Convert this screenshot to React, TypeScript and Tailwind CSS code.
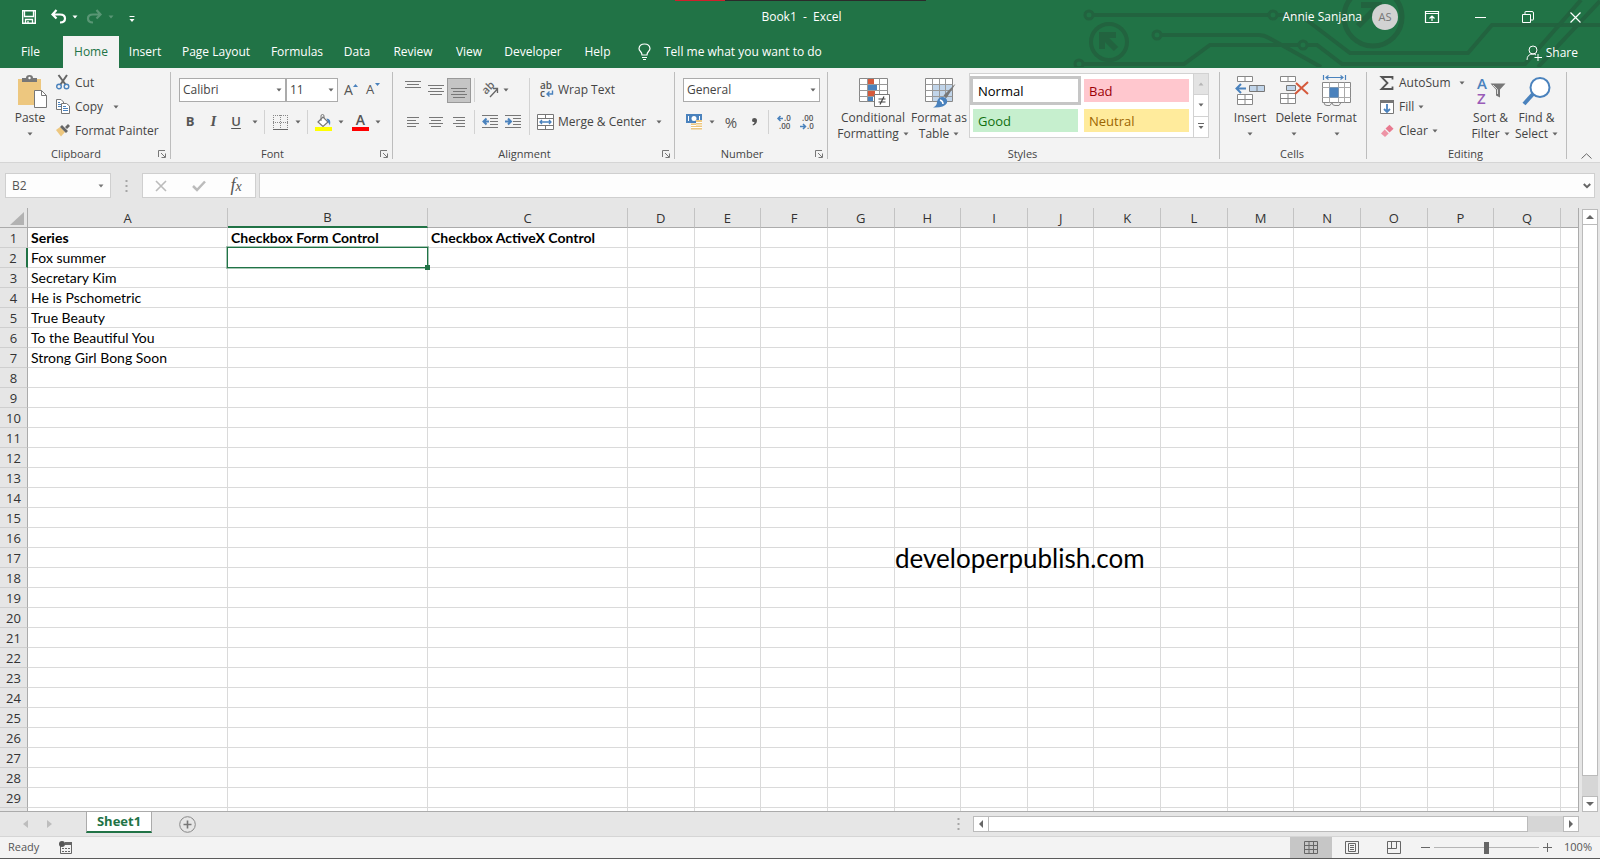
import React from 'react'

interface IconProps {
    children: React.ReactNode
    w: number
    h: number
    className?: string
}

// Thin svg wrapper, one unit = one pixel
const Icon: React.FC<IconProps> = ({ children, w, h, className = '' }) => (
    <svg width={w} height={h} viewBox={`0 0 ${w} ${h}`} fill="none" aria-hidden="true" className={`shrink-0 overflow-visible ${className}`}>
        {children}
    </svg>
)

const Caret: React.FC<{ className?: string }> = ({ className = 'text-[#666]' }) => (
    <Icon w={6} h={4} className={className}>
        <path d="M.5.5h5L3 3.5z" fill="currentColor" />
    </Icon>
)

const Sep: React.FC<{ className?: string }> = ({ className = 'h-6 bg-[#d2d2d2]' }) => <span className={`w-px shrink-0 ${className}`} />

const tabs = [
    { label: 'File', width: 'w-[63px]' },
    { label: 'Home', width: 'w-14' },
    { label: 'Insert', width: 'w-[52px]' },
    { label: 'Page Layout', width: 'w-[90px]' },
    { label: 'Formulas', width: 'w-[72px]' },
    { label: 'Data', width: 'w-12' },
    { label: 'Review', width: 'w-16' },
    { label: 'View', width: 'w-12' },
    { label: 'Developer', width: 'w-20' },
    { label: 'Help', width: 'w-[49px]' },
]

const columns = 'ABCDEFGHIJKLMNOPQ'.split('')

const rows: string[][] = [
    ['Series', 'Checkbox Form Control', 'Checkbox ActiveX Control'],
    ['Fox summer'],
    ['Secretary Kim'],
    ['He is Pschometric'],
    ['True Beauty'],
    ['To the Beautiful You'],
    ['Strong Girl Bong Soon'],
]

const styleTiles = [
    { label: 'Normal', className: 'bg-white text-black outline-3 outline-[#c6c6c6]' },
    { label: 'Bad', className: 'bg-[#ffc7ce] text-[#9c0006]' },
    { label: 'Good', className: 'bg-[#c6efce] text-[#107010]' },
    { label: 'Neutral', className: 'bg-[#ffeb9c] text-[#9c6500]' },
]

const Circuit: React.FC = () => (
    <svg
        width="530"
        height="67"
        viewBox="1070 0 530 67"
        fill="none"
        stroke="#22633f"
        strokeWidth="4"
        aria-hidden="true"
        className="absolute right-0 top-0"
    >
        <circle cx="1089" cy="15" r="4" strokeWidth="3" />
        <path d="M1093 15h176" />
        <circle cx="1273" cy="15" r="4" strokeWidth="3" />
        <path d="M1277 15h23l50 38h118l24-28h108" />
        <circle cx="1157" cy="35" r="4" strokeWidth="3" />
        <path d="M1161 35h98q5 0 10 3l52 29" />
        <circle cx="1079" cy="64" r="4" strokeWidth="3" />
        <path d="M1083 64h101l26-19h88" />
        <circle cx="1303" cy="45" r="4" strokeWidth="3" />
        <path d="M1307 45h10l25 19h183l56-64M1538 67l62-66" />
        <circle cx="1109" cy="42" r="18" />
        <path d="M1102 49V35h14M1103 36l13 13" strokeWidth="6" />
        <circle cx="1373" cy="17" r="29" strokeWidth="5" />
        <path d="M1361 5h18v18M1378 6l-20 20" strokeWidth="6" />
    </svg>
)

const TitleBar: React.FC = () => (
    <div className="relative flex h-9 items-center pb-1 pt-0.5 text-xs text-white">
        <div className="flex flex-1 items-center pl-[22px]">
            <button aria-label="Save">
                <Icon w={14} h={14}>
                    <path d="M.7.7h12.6v12.6H.7z" stroke="#fff" strokeWidth="1.4" />
                    <path d="M2.5 1v5.5h9V1M3.5 13.5v-4h7v4M6 11v3" stroke="#fff" strokeWidth="1.3" />
                </Icon>
            </button>
            <button aria-label="Undo" className="ml-[15px]">
                <Icon w={15} h={14}>
                    <path d="M5.5 0 1.5 4.500l4 4M2 4.500h7q5 0 5 4t-5 4" stroke="#fff" strokeWidth="2.200" />
                </Icon>
            </button>
            <button aria-label="Undo history" className="ml-1.5">
                <Caret className="text-white" />
            </button>
            <button aria-label="Redo" disabled className="ml-[9px] opacity-25">
                <Icon w={15} h={14}>
                    <path d="m9.500 0 4 4.500-4 4M13 4.500H6q-5 0-5 4t5 4" stroke="#fff" strokeWidth="2.200" />
                </Icon>
            </button>
            <button aria-label="Redo history" disabled className="ml-1.5 opacity-25">
                <Caret className="text-white" />
            </button>
            <button aria-label="Customize Quick Access Toolbar" className="ml-[15px] mt-1">
                <Icon w={6} h={7}>
                    <path d="M.5.5h5" stroke="#fff" />
                    <path d="M.5 3h5L3 6z" fill="#fff" />
                </Icon>
            </button>
        </div>
        <h1 className="whitespace-pre">Book1  -  Excel</h1>
        <div className="flex flex-1 items-center justify-end pr-[19px]">
            <span>Annie Sanjana</span>
            <span className="ml-2.5 mr-[27px] flex size-[26px] items-center justify-center rounded-full bg-[#d2d2d2] text-[11px] text-[#777]">AS</span>
            <button aria-label="Ribbon display options">
                <Icon w={14} h={12}>
                    <path d="M.5.5h13v11H.5zM1 2.500h12M7 10V5M4.500 7.500 7 5l2.500 2.500" stroke="#fff" strokeWidth="1.200" />
                </Icon>
            </button>
            <button aria-label="Minimize" className="ml-9">
                <Icon w={11} h={11}>
                    <path d="M0 5.500h11" stroke="#fff" />
                </Icon>
            </button>
            <button aria-label="Restore" className="ml-9">
                <Icon w={12} h={12}>
                    <path d="M.5 3.500h8v8h-8zM3 3.500V1q0-.5.5-.5H10q1.500 0 1.500 1.500v6.500q0 .5-.5.5H8.500" stroke="#fff" />
                </Icon>
            </button>
            <button aria-label="Close" className="ml-9">
                <Icon w={11} h={11}>
                    <path d="m.5.5 10 10M10.500.5l-10 10" stroke="#fff" strokeWidth="1.200" />
                </Icon>
            </button>
        </div>
    </div>
)

const RibbonTabs: React.FC = () => (
    <nav className="relative flex h-8 shrink-0 items-stretch text-xs text-white">
        {tabs.map((tab) => (
            <button
                key={tab.label}
                className={`${tab.width} shrink-0 whitespace-nowrap ${tab.label === 'Home' ? 'bg-[#f3f3f3] text-[#217346]' : ''} ${tab.label === 'File' ? 'pr-0.5' : ''}`}
            >
                {tab.label}
            </button>
        ))}
        <button className="ml-4 flex items-center whitespace-nowrap">
            <Icon w={13} h={18} className="mr-[13px]">
                <path d="M4 12q0-2-1.500-3.500Q1 7 1 5.500 1.500 1 6.500 1T12 5.500q0 1.500-1.500 3T9 12zM4 14.500h5M5 16.500h3" stroke="#fff" strokeWidth="1.200" />
            </Icon>
            Tell me what you want to do
        </button>
        <button className="ml-auto mr-[22px] flex items-center pt-0.5">
            <Icon w={16} h={16} className="mr-1">
                <circle cx="7" cy="5" r="4" stroke="#fff" />
                <path d="M1 15q0-6 6-6 2 0 3 1M12 9v7M8.500 12.500H16" stroke="#fff" />
            </Icon>
            Share
        </button>
    </nav>
)

interface GroupProps {
    label: string
    width: string
    launcher?: boolean
    children: React.ReactNode
}

const Group: React.FC<GroupProps> = ({ label, width, launcher, children }) => (
    <section aria-label={label} className={`${width} flex shrink-0 pt-0.5`}>
        <div className="flex min-w-0 flex-1 flex-col">
            <div className="flex h-[78px]">{children}</div>
            <div className="flex h-3 items-center pl-0.5 pr-1 text-[11px] text-[#444]">
                <span className={`flex-1 text-center leading-3 ${launcher ? 'pr-2' : ''}`}>{label}</span>
                {launcher && (
                    <button aria-label={`${label} settings`}>
                        <Icon w={8} h={8}>
                            <path d="M.5 7V.5H7M3 3l4 4M7.500 3.500v4h-4" stroke="#777" />
                        </Icon>
                    </button>
                )}
            </div>
        </div>
        <Sep className="mt-0.5 h-[87px] bg-[#bdbdbd]" />
    </section>
)

interface BigButtonProps {
    icon: React.ReactNode
    lines: string[]
    width: string
    caretBelow?: boolean
}

const BigButton: React.FC<BigButtonProps> = ({ icon, lines, width, caretBelow }) => (
    <button className={`${width} flex shrink-0 flex-col items-center self-start whitespace-nowrap pt-0.5`}>
        <span className="flex h-9 items-center pt-0.5">{icon}</span>
        <span className="h-4 pt-0.5 leading-4">{lines[0]}</span>
        <span className="flex h-[17px] items-center gap-1 pt-0.5">
            {!caretBelow && lines[1]}
            <Caret />
        </span>
    </button>
)

const Combo: React.FC<{ label: string; value: string; width: string }> = ({ label, value, width }) => (
    <span className={`relative h-6 ${width}`}>
        <select aria-label={label} defaultValue={value} className="block h-6 w-full appearance-none border border-[#ababab] bg-white pl-[3px] leading-5 text-[#444]">
            <option>{value}</option>
        </select>
        <Caret className="pointer-events-none absolute right-1 top-2.5 text-[#666]" />
    </span>
)

const Lines: React.FC<{ d: string; className?: string }> = ({ d, className }) => (
    <Icon w={16} h={14} className={className}>
        <path d={d} stroke="#777" />
    </Icon>
)

const ClipboardGroup: React.FC = () => (
    <Group label="Clipboard" width="w-[171px]" launcher>
        <BigButton
            width="ml-2 w-11"
            lines={['Paste']}
            caretBelow
            icon={
                <Icon w={30} h={33} className="ml-1.5">
                    <path d="M0 4h23v26H0z" fill="#edc77f" />
                    <path d="M4 7V3h4q0-3 3.500-3T15 3h4v4z" fill="#777" />
                    <circle cx="11.500" cy="3" r="1.200" fill="#fff" />
                    <path d="M16.500 15.500h7l5 5v12h-12z" fill="#fff" stroke="#777" />
                    <path d="M23.500 15.500v5h5" stroke="#777" />
                </Icon>
            }
        />
        <div className="ml-1 flex flex-col whitespace-nowrap">
            <button className="flex h-6 items-center pt-px">
                <Icon w={14} h={15} className="mr-[5px]">
                    <path d="m2.500 0 7 9.500M11 0 4.500 9.500" stroke="#666" strokeWidth="2" />
                    <circle cx="3" cy="11.500" r="2.300" stroke="#4a82bd" strokeWidth="1.400" />
                    <circle cx="10.500" cy="11.500" r="2.300" stroke="#4a82bd" strokeWidth="1.400" />
                </Icon>
                Cut
            </button>
            <button className="flex h-6 items-center pt-px">
                <Icon w={14} h={15} className="mr-[5px]">
                    <path d="M.5.5H5l2.500 2.500v7.500h-7z" fill="#fff" stroke="#777" />
                    <path d="M5.500 4.500h5L13.500 7v7.500h-8z" fill="#fff" stroke="#777" />
                    <path d="M2 3.500h2M2 5.500h3M2 7.500h3M7 7.500h3M7 9.500h5M7 11.500h5" stroke="#4a82bd" />
                </Icon>
                Copy
                <span className="ml-2.5">
                    <Caret />
                </span>
            </button>
            <button className="flex h-6 items-center pt-px">
                <Icon w={14} h={13} className="mr-[5px]">
                    <path d="m0 6 4-3 5 5-4 4.500z" fill="#edc77f" />
                    <path d="m4 3 2-2 6 6-2 2zM9 3l3-3 2 2-3 3z" fill="#666" />
                </Icon>
                Format Painter
            </button>
        </div>
    </Group>
)

const FontGroup: React.FC = () => (
    <Group label="Font" width="w-[222px]" launcher>
        <div className="flex flex-col gap-2 pl-2 pt-2">
            <div className="flex h-6 items-center">
                <Combo label="Font name" value="Calibri" width="w-[107px]" />
                <Combo label="Font size" value="11" width="w-[52px]" />
                <button aria-label="Increase font size" className="relative ml-1.5 w-3.5 text-left text-[14px] text-[#555]">
                    A
                    <Icon w={5} h={3} className="absolute right-0 top-[3px]">
                        <path d="M0 3h5L2.500 0z" fill="#4a82bd" />
                    </Icon>
                </button>
                <button aria-label="Decrease font size" className="relative ml-2 w-3.5 text-left text-[13px] text-[#555]">
                    A
                    <Icon w={5} h={3} className="absolute right-0 top-0.5">
                        <path d="M0 0h5L2.500 3z" fill="#4a82bd" />
                    </Icon>
                </button>
            </div>
            <div className="flex h-6 items-center text-[13px] text-[#555]">
                <button className="w-[22px] font-bold">B</button>
                <button className="w-[25px] font-['Liberation_Serif',serif] text-[15px] font-bold italic">I</button>
                <button className="w-5 font-semibold underline underline-offset-2">U</button>
                <button aria-label="Underline options" className="flex w-[18px] justify-center">
                    <Caret />
                </button>
                <Sep />
                <button aria-label="Borders" className="flex w-[30px] justify-center">
                    <Icon w={15} h={15}>
                        <path d="M.5 0v14M14.500 0v14M7.500 0v14M0 .5h15M0 7.500h15" stroke="#888" strokeDasharray="1 1" />
                        <path d="M0 14.500h15" stroke="#666" />
                    </Icon>
                </button>
                <button aria-label="Border options" className="flex w-3 justify-start">
                    <Caret />
                </button>
                <Sep />
                <button aria-label="Fill color" className="ml-[7px]">
                    <Icon w={17} h={17}>
                        <path d="m3 8 5-5 5 5-5 4.500z" fill="#fff" stroke="#777" strokeWidth="1.200" />
                        <path d="M6 7V2q0-1.500 1.500-1.500T9 2v2" stroke="#777" />
                        <path d="M11.500 4.500q5 0 3.500 7l-2-3.500z" fill="#4a82bd" />
                        <path d="M0 13h17v4H0z" fill="#ff0" />
                    </Icon>
                </button>
                <button aria-label="Fill color options" className="ml-1.5">
                    <Caret />
                </button>
                <button aria-label="Font color" className="ml-2 flex w-[17px] flex-col items-center">
                    <span className="h-[13px] text-[14px] font-semibold leading-3">A</span>
                    <span className="h-1 w-full bg-[#f00]" />
                </button>
                <button aria-label="Font color options" className="ml-1.5">
                    <Caret />
                </button>
            </div>
        </div>
    </Group>
)

const AlignmentGroup: React.FC = () => (
    <Group label="Alignment" width="w-[282px]" launcher>
        <div className="flex w-[136px] flex-col gap-2 pl-2 pt-2">
            <div className="flex h-6 items-center">
                <button aria-label="Top align" className="flex w-[23px] justify-center">
                    <Lines d="M0 .5h16M2 3.500h12M0 6.500h16" className="-mt-1" />
                </button>
                <button aria-label="Middle align" className="flex w-[23px] justify-center">
                    <Lines d="M0 2.500h16M2 5.500h12M0 8.500h16M2 11.500h12" />
                </button>
                <button aria-label="Bottom align" aria-pressed="true" className="flex h-[25px] w-6 items-center justify-center border border-[#999] bg-[#c5c5c5]">
                    <Lines d="M0 3.500h16M2 6.500h12M0 9.500h16M2 12.500h12" className="mt-1" />
                </button>
                <Sep className="ml-[3px] h-6 bg-[#d2d2d2]" />
                <button aria-label="Orientation" className="ml-[7px] flex items-center gap-1">
                    <Icon w={17} h={16}>
                        <text x="0" y="0" fontSize="11" fontWeight="600" fill="#666" transform="translate(4 13) rotate(-45)">ab</text>
                        <path d="m8 15 7-7.500M15.500 11V6.500H11" stroke="#666" strokeWidth="1.300" />
                    </Icon>
                    <Caret />
                </button>
            </div>
            <div className="flex h-6 items-center">
                <button aria-label="Align left" className="flex w-[23px] justify-center">
                    <Lines d="M2 2.500h12M2 5.500h9M2 8.500h12M2 11.500h9" />
                </button>
                <button aria-label="Center" className="flex w-[23px] justify-center">
                    <Lines d="M1 2.500h14M3 5.500h10M1 8.500h14M3 11.500h10" />
                </button>
                <button aria-label="Align right" className="flex w-6 justify-center">
                    <Lines d="M2 2.500h12M5 5.500h9M2 8.500h12M5 11.500h9" />
                </button>
                <Sep className="ml-[3px] h-6 bg-[#d2d2d2]" />
                <button aria-label="Decrease indent" className="ml-[7px]">
                    <Icon w={16} h={14}>
                        <path d="M0 .5h16M8 3.500h8M8 6.500h8M8 9.500h8M0 12.500h16" stroke="#777" />
                        <path d="M7 6.500H2M4.500 3.500l-3 3 3 3" stroke="#4a82bd" strokeWidth="2" />
                    </Icon>
                </button>
                <button aria-label="Increase indent" className="ml-[7px]">
                    <Icon w={16} h={14}>
                        <path d="M0 .5h16M8 3.500h8M8 6.500h8M8 9.500h8M0 12.500h16" stroke="#777" />
                        <path d="M0 6.500h5M3 3.500l3 3-3 3" stroke="#4a82bd" strokeWidth="2" />
                    </Icon>
                </button>
            </div>
        </div>
        <Sep className="mt-2 h-[57px] bg-[#d2d2d2]" />
        <div className="flex flex-1 flex-col items-start gap-2 whitespace-nowrap pl-[7px] pt-2">
            <button className="flex h-6 items-center">
                <Icon w={17} h={16} className="mr-1">
                    <text x="3" y="7" fontSize="10" fontWeight="600" fill="#555">ab</text>
                    <text x="3" y="15" fontSize="10" fontWeight="600" fill="#555">c</text>
                    <path d="M15.500 8.500V12H10M12.500 9.500 10 12l2.500 2.500" stroke="#4a82bd" strokeWidth="1.400" />
                </Icon>
                Wrap Text
            </button>
            <button className="flex h-6 items-center">
                <Icon w={17} h={16} className="mr-1">
                    <path d="M.5.5h16v15H.5zM.5 4.500h16M.5 11.500h16M8.500.5v4M8.500 11.500v4" fill="#fff" stroke="#777" />
                    <path d="M3 8h11M5 6 3 8l2 2M12 6l2 2-2 2" stroke="#4a82bd" strokeWidth="1.300" />
                </Icon>
                Merge &amp; Center
                <span className="ml-2.5">
                    <Caret />
                </span>
            </button>
        </div>
    </Group>
)

const NumberGroup: React.FC = () => (
    <Group label="Number" width="w-[153px]" launcher>
        <div className="flex flex-col gap-2 pl-2 pt-2">
            <Combo label="Number format" value="General" width="w-[137px]" />
            <div className="flex h-6 items-center pl-[3px]">
                <button aria-label="Accounting format" className="flex items-center gap-1.5">
                    <Icon w={17} h={16}>
                        <path d="M0 0h16v9H0z" fill="#4a82bd" />
                        <circle cx="8" cy="4.500" r="2.500" fill="#fff" />
                        <path d="M2 2h1v5H2zM13 2h1v5h-1z" fill="#fff" />
                        <path d="M5 9.500h5v6H5zM10 6h6v9.500h-6z" fill="#edc77f" />
                        <path d="M5 11.500h5M5 13.500h5M10 8.500h6M10 11h6M10 13.500h6" stroke="#fff" />
                    </Icon>
                    <Caret />
                </button>
                <button aria-label="Percent style" className="ml-2 w-4 text-[15px] text-[#555]">%</button>
                <button aria-label="Comma style" className="ml-2.5 flex w-2.5 justify-center">
                    <Icon w={5} h={8}>
                        <path d="M2.500 0q2.500 0 2.500 2.500Q5 6 1 7.500L.5 6.500Q2.500 5.500 2.500 4 0 4.500 0 2.200 0 0 2.500 0" fill="#555" />
                    </Icon>
                </button>
                <Sep className="ml-[9px] h-6 bg-[#d2d2d2]" />
                <button aria-label="Increase decimal" className="ml-2">
                    <Icon w={15} h={15}>
                        <text x="7" y="6" fontSize="8" fontWeight="600" fill="#555">.0</text>
                        <text x="2" y="14" fontSize="8" fontWeight="600" fill="#555">.00</text>
                        <path d="M6 3.500H1.500M3.500 1 1 3.500 3.500 6" stroke="#4a82bd" strokeWidth="1.500" />
                    </Icon>
                </button>
                <button aria-label="Decrease decimal" className="ml-2">
                    <Icon w={15} h={15}>
                        <text x="2" y="6" fontSize="8" fontWeight="600" fill="#555">.00</text>
                        <text x="7" y="14" fontSize="8" fontWeight="600" fill="#555">.0</text>
                        <path d="M0 11.500h5M3 9l2.500 2.500L3 14" stroke="#4a82bd" strokeWidth="1.500" />
                    </Icon>
                </button>
            </div>
        </div>
    </Group>
)

const StylesGroup: React.FC = () => (
    <Group label="Styles" width="w-[392px]">
        <BigButton
            width="ml-2 w-[74px]"
            lines={['Conditional', 'Formatting']}
            icon={
                <Icon w={31} h={30} className="ml-0.5 mt-1">
                    <path d="M.5.5h28v23H.5z" fill="#fff" stroke="#888" />
                    <path d="M9 1h6v6H9zM9 13h7v5H9z" fill="#d5593b" />
                    <path d="M9 7h9v5H9zM9 18h5v5H9z" fill="#4a82bd" />
                    <path d="M.5 6.500h28M.5 12.500h28M.5 18.500h28M8.500.5v23M20.500.5v23" stroke="#999" />
                    <path d="M15.500 16.500h15v12h-15z" fill="#fff" stroke="#777" />
                    <path d="M19.500 21h7M19.500 24h7M25 18.500l-4 8" stroke="#444" strokeWidth="1.200" />
                </Icon>
            }
        />
        <BigButton
            width="w-[58px]"
            lines={['Format as', 'Table']}
            icon={
                <Icon w={31} h={30} className="ml-0.5 mt-1">
                    <path d="M.5.5h27v23H.5z" fill="#fff" stroke="#888" />
                    <path d="M7 6h20v17H7z" fill="#c1d5ea" />
                    <path d="M.5 6.500h27M.5 12.500h27M.5 18.500h27M7.500.5v23M14.500.5v23M20.500.5v23" stroke="#999" />
                    <path d="m30.500 6-9 14-3-2.500L29 7z" fill="#777" />
                    <path d="M18 19q5 1 4 6-3 5-14 4.500 4-2 4-5.500 1-5 6-5" fill="#4a82bd" />
                    <path d="M15 22q3 1 3 4" stroke="#fff" strokeWidth="1.500" />
                </Icon>
            }
        />
        <div className="ml-px mt-[3px] flex h-[65px] border border-[#d2d2d2] bg-white">
            <div className="grid w-[223px] grid-cols-2 gap-x-1.5 gap-y-[7px] px-[3px] py-[5px] pr-1 text-[13px]">
                {styleTiles.map((tile) => (
                    <button key={tile.label} className={`px-[5px] text-left leading-5 ${tile.className}`}>
                        {tile.label}
                    </button>
                ))}
            </div>
            <div className="flex w-[15px] flex-col divide-y divide-[#d2d2d2] border-l border-[#d2d2d2]">
                <button aria-label="Scroll styles up" disabled className="flex flex-1 items-center justify-center bg-[#e3e3e3]">
                    <Caret className="rotate-180 text-[#b5b5b5]" />
                </button>
                <button aria-label="Scroll styles down" className="flex flex-1 items-center justify-center">
                    <Caret />
                </button>
                <button aria-label="More styles" className="flex flex-1 items-center justify-center">
                    <Icon w={6} h={7}>
                        <path d="M0 .5h6" stroke="#666" />
                        <path d="M.5 3h5L3 6z" fill="#666" />
                    </Icon>
                </button>
            </div>
        </div>
    </Group>
)

const CellsGroup: React.FC = () => (
    <Group label="Cells" width="w-[147px]">
        <BigButton
            width="ml-2 w-11"
            lines={['Insert']}
            caretBelow
            icon={
                <Icon w={30} h={30}>
                    <path d="M2.500.5h15v5h-15zM10 .5v5M2.500 18.500h15v10h-15zM2.500 23.500h15M10 18.500v10" fill="#fff" stroke="#888" />
                    <path d="M14.500 9.500h15v6h-15zM22 9.500v6" fill="#c1d5ea" stroke="#777" />
                    <path d="M11 12.500H2M6 8l-4.500 4.500L6 17" stroke="#4a82bd" strokeWidth="2" />
                </Icon>
            }
        />
        <BigButton
            width="w-[43px]"
            lines={['Delete']}
            caretBelow
            icon={
                <Icon w={30} h={30}>
                    <path d="M1.500.5h15v5h-15zM9 .5v5M1.500 17.500h15v10h-15zM1.500 22.500h15M9 17.500v10" fill="#fff" stroke="#888" />
                    <path d="M7.500 9.500h9v5h-9z" fill="#c1d5ea" stroke="#777" />
                    <path d="m17 7 12 11M29 6 16 18" stroke="#d5593b" strokeWidth="2" />
                </Icon>
            }
        />
        <BigButton
            width="w-[43px]"
            lines={['Format']}
            caretBelow
            icon={
                <Icon w={30} h={32}>
                    <path d="M1.500 0v5M23.500 0v5M4 2.500h17M6.500.5l-2.500 2 2.500 2M18.500.5l2.500 2-2.500 2" stroke="#4a82bd" strokeWidth="1.200" />
                    <path d="M.5 7.500h28v20H.5z" fill="#fff" stroke="#888" />
                    <path d="M.5 12.500h28M.5 22.500h28M7.500 7.500v20M16.500 7.500v20M22.500 7.500v20" stroke="#aaa" />
                    <path d="M7.500 12.500h9v10h-9z" fill="#4a82bd" />
                    <path d="M2 27.500q0 3 3 3h3l2-3q0 3 3 3h4l2-3" stroke="#888" />
                </Icon>
            }
        />
    </Group>
)

const EditingGroup: React.FC = () => (
    <Group label="Editing" width="w-[200px]">
        <div className="flex w-[99px] flex-col items-start whitespace-nowrap pl-[13px]">
            <button className="flex h-6 items-center pt-px">
                <Icon w={14} h={14} className="mr-[5px]">
                    <path d="M12.500 3.500V1H1.500l6 6-6 6h11v-2.500" stroke="#555" strokeWidth="1.800" />
                </Icon>
                AutoSum
                <span className="ml-2">
                    <Caret />
                </span>
            </button>
            <button className="flex h-6 items-center pt-px">
                <Icon w={14} h={14} className="mr-[5px]">
                    <path d="M.5.5h13v13H.5z" fill="#fff" stroke="#777" />
                    <path d="M0 1.500h14" stroke="#777" strokeWidth="3" />
                    <path d="M7 4v8M4 9l3 3 3-3" stroke="#4a82bd" strokeWidth="1.800" />
                </Icon>
                Fill
                <span className="ml-1">
                    <Caret />
                </span>
            </button>
            <button className="flex h-6 items-center pt-px">
                <Icon w={14} h={14} className="mr-[5px]">
                    <path d="M5.500 4.500 9.500.8l4 4-4 3.700z" fill="#e8798f" />
                    <path d="m1 9.500 3.700-4 4 4L5 13z" fill="#ed93a5" />
                </Icon>
                Clear
                <span className="ml-1">
                    <Caret />
                </span>
            </button>
        </div>
        <BigButton
            width="w-[49px]"
            lines={['Sort &', 'Filter']}
            icon={
                <Icon w={30} h={28}>
                    <text x="1" y="12" fontSize="15" fontWeight="600" fill="#4a82bd">A</text>
                    <text x="1" y="27" fontSize="15" fontWeight="600" fill="#9a5cb8">Z</text>
                    <path d="M14.500 6.500h15l-5.500 6v8l-4-2v-6z" fill="#777" />
                    <path d="m17 8 4.500 4.500V17" stroke="#ddd" />
                </Icon>
            }
        />
        <BigButton
            width="w-[43px]"
            lines={['Find &', 'Select']}
            icon={
                <Icon w={29} h={29}>
                    <circle cx="18" cy="10.500" r="9.500" fill="#fff" stroke="#4a82bd" strokeWidth="2" />
                    <path d="m11 17-9 10" stroke="#4a82bd" strokeWidth="4" />
                </Icon>
            }
        />
    </Group>
)

const Ribbon: React.FC = () => (
    <div className="flex h-[95px] shrink-0 border-b border-[#d5d5d5] bg-[#f3f3f3] text-xs text-[#444]">
        <ClipboardGroup />
        <FontGroup />
        <AlignmentGroup />
        <NumberGroup />
        <StylesGroup />
        <CellsGroup />
        <EditingGroup />
        <button aria-label="Collapse the ribbon" className="mb-[3px] ml-auto mr-2 self-end">
            <Icon w={11} h={6}>
                <path d="M.5 5.500 5.500.8l5 4.700" stroke="#666" />
            </Icon>
        </button>
    </div>
)

const Dots: React.FC = () => (
    <Icon w={3} h={12}>
        <path d="M1.500 0v12" stroke="#a5a5a5" strokeWidth="2" strokeDasharray="2 3" />
    </Icon>
)

const FormulaBar: React.FC = () => (
    <div className="flex shrink-0 items-center px-[5px] py-2.5 text-xs text-[#555]">
        <div className="relative w-[106px]">
            <input aria-label="Name box" defaultValue="B2" className="block h-[25px] w-full border border-[#cfcfcf] bg-[#fdfdfd] pl-1.5" />
            <Caret className="absolute right-[7px] top-[11px] text-[#777]" />
        </div>
        <div className="flex w-[31px] justify-center">
            <Dots />
        </div>
        <div className="flex h-[25px] w-[114px] items-center border border-[#cfcfcf] bg-[#fdfdfd]">
            <button aria-label="Cancel" disabled className="flex w-9 justify-center">
                <Icon w={12} h={12}>
                    <path d="m1 1 10 10M11 1 1 11" stroke="#bbb" strokeWidth="1.600" />
                </Icon>
            </button>
            <button aria-label="Enter" disabled className="flex w-10 justify-center">
                <Icon w={14} h={12}>
                    <path d="m1 6 4 4L13 1.500" stroke="#bbb" strokeWidth="2.500" />
                </Icon>
            </button>
            <button aria-label="Insert function" className="w-[34px] font-['Liberation_Serif',serif] text-[18px] italic leading-5">
                f<span className="text-[14px]">x</span>
            </button>
        </div>
        <div className="relative ml-[3px] flex-1">
            <input aria-label="Formula bar" className="block h-[25px] w-full border border-[#cfcfcf] bg-[#fdfdfd] px-1.5" />
            <Icon w={8} h={6} className="absolute right-1 top-2.5">
                <path d="m.8 1 3.200 3.200L7.200 1" stroke="#666" strokeWidth="2" />
            </Icon>
        </div>
    </div>
)

const Grid: React.FC = () => (
    <div className="relative min-w-0 flex-1 overflow-hidden border-b border-r border-[#ababab]">
        <table className="w-full table-fixed border-separate border-spacing-0 bg-white">
            <colgroup>
                <col className="w-7" />
                {columns.map((col, i) => (
                    <col key={col} className={i < 3 ? 'w-[200px]' : ''} />
                ))}
                <col className="w-[17px]" />
            </colgroup>
            <thead>
                <tr className="h-5 bg-[#e6e6e6] text-[13px] leading-[18px] text-[#333]">
                    <th className="border-b border-r border-[#ababab] p-0">
                        <Icon w={14} h={14} className="ml-auto mr-[3px]">
                            <path d="M14 1v13H0z" fill="#b2b2b2" />
                        </Icon>
                    </th>
                    {columns.map((col) => (
                        <th
                            key={col}
                            scope="col"
                            className={`border-r border-r-[#c3c3c3] p-0 pt-px font-normal ${col === 'B' ? 'border-b-2 border-b-[#217346] leading-[17px]' : 'border-b border-b-[#ababab]'}`}
                        >
                            {col}
                        </th>
                    ))}
                    <th className="border-b border-[#ababab] p-0" />
                </tr>
            </thead>
            <tbody className="font-['Lato',sans-serif] text-[14px] leading-[18px] text-black">
                {Array.from({ length: 30 }, (_, r) => (
                    <tr key={r} className="h-5">
                        <th
                            scope="row"
                            className={`border-b border-r border-b-[#cfcfcf] bg-[#e6e6e6] p-0 pt-px text-center font-['Open_Sans',sans-serif] text-[13px] font-normal text-[#333] ${r === 1 ? 'border-r-2 border-r-[#217346]' : 'border-r-[#ababab]'}`}
                        >
                            {r + 1}
                        </th>
                        {columns.map((col, c) => (
                            <td
                                key={col}
                                className={`relative whitespace-nowrap border-b border-r border-[#dadada] p-0 pl-[3px] pt-px ${r === 0 ? 'font-bold' : ''}`}
                            >
                                {rows[r]?.[c]}
                                {r === 1 && col === 'B' && (
                                    <span className="absolute -inset-px z-10 border border-[#217346] outline outline-[#217346]/40">
                                        <span className="absolute -bottom-[3px] -right-[3px] size-[5px] bg-[#217346]" />
                                    </span>
                                )}
                            </td>
                        ))}
                        <td className="border-b border-[#dadada] p-0" />
                    </tr>
                ))}
            </tbody>
        </table>
        <p className="absolute left-[895px] top-[332px] font-['Lato',sans-serif] text-[26px] leading-9 text-black">developerpublish.com</p>
    </div>
)

const VerticalScroll: React.FC = () => (
    <div className="flex w-[21px] shrink-0 flex-col items-center pt-px">
        <button aria-label="Scroll up" className="flex h-4 w-4 items-center justify-center border border-[#bbb] bg-white">
            <Icon w={8} h={4}>
                <path d="M0 4h8L4 0z" fill="#666" />
            </Icon>
        </button>
        <div className="flex w-4 flex-1 flex-col bg-[#d6d6d6] pb-5">
            <div className="flex-1 border border-t-0 border-[#bbb] bg-white" />
        </div>
        <button aria-label="Scroll down" className="flex h-4 w-4 items-center justify-center border border-[#bbb] bg-white">
            <Icon w={8} h={4}>
                <path d="M0 0h8L4 4z" fill="#666" />
            </Icon>
        </button>
    </div>
)

const SheetBar: React.FC = () => (
    <div className="flex h-6 shrink-0 items-center">
        <button aria-label="Previous sheet" disabled className="ml-[23px]">
            <Icon w={5} h={8}>
                <path d="M5 0v8L0 4z" fill="#bdbdbd" />
            </Icon>
        </button>
        <button aria-label="Next sheet" disabled className="ml-[19px]">
            <Icon w={5} h={8}>
                <path d="M0 0v8l5-4z" fill="#bdbdbd" />
            </Icon>
        </button>
        <button className="ml-[34px] h-[21px] w-[66px] self-start border-x border-b-2 border-x-[#ababab] border-b-[#217346] bg-white pb-0.5 text-[13px] font-bold leading-4 text-[#217346]">
            Sheet1
        </button>
        <button aria-label="New sheet" className="ml-[27px]">
            <Icon w={17} h={17}>
                <circle cx="8.500" cy="8.500" r="7.800" stroke="#888" />
                <path d="M8.500 4.500v8M4.500 8.500h8" stroke="#777" strokeWidth="1.600" />
            </Icon>
        </button>
        <div className="ml-auto mr-[21px] flex w-[622px] items-center">
            <Dots />
            <button aria-label="Scroll left" className="ml-[13px] flex h-4 w-4 items-center justify-center border border-[#bbb] bg-white">
                <Icon w={4} h={8}>
                    <path d="M4 0v8L0 4z" fill="#666" />
                </Icon>
            </button>
            <div className="flex h-4 flex-1 bg-[#d6d6d6] pr-[35px]">
                <div className="flex-1 border border-l-0 border-[#bbb] bg-white" />
            </div>
            <button aria-label="Scroll right" className="flex h-4 w-4 items-center justify-center border border-[#bbb] bg-white">
                <Icon w={4} h={8}>
                    <path d="M0 0v8l4-4z" fill="#666" />
                </Icon>
            </button>
        </div>
    </div>
)

const StatusBar: React.FC = () => (
    <div className="flex h-[22px] shrink-0 items-center border-t border-[#d5d5d5] bg-[#f3f3f3] text-[11px] text-[#555]">
        <span className="w-[59px] pl-2">Ready</span>
        <button aria-label="Record macro">
            <Icon w={13} h={13}>
                <path d="M1.500 4v8.500h11V2" stroke="#666" />
                <path d="M6 1h7v3H6z" fill="#666" />
                <circle cx="3" cy="3" r="3" fill="#555" />
                <path d="M3 7.500h8M3 10.500h8" stroke="#666" strokeDasharray="2 1" />
            </Icon>
        </button>
        <button aria-label="Normal view" aria-pressed="true" className="ml-auto flex h-full w-[42px] items-center justify-center bg-[#c6c6c6]">
            <Icon w={14} h={13}>
                <path d="M.5.5h13v12H.5zM.5 4.500h13M.5 8.500h13M5 .5v12M9.500.5v12" stroke="#666" />
            </Icon>
        </button>
        <button aria-label="Page layout view" className="flex w-10 justify-center">
            <Icon w={14} h={13}>
                <path d="M.5.5h13v12H.5zM3.500 2.500h7v8h-7zM5 4.500h4M5 6.500h4M5 8.500h4" stroke="#666" />
            </Icon>
        </button>
        <button aria-label="Page break view" className="flex w-[43px] justify-center">
            <Icon w={14} h={13}>
                <path d="M.5.5h13v12H.5zM4.500 0v7.500M9.500 0v7.500M0 7.500h9.500" stroke="#666" />
            </Icon>
        </button>
        <button aria-label="Zoom out" className="ml-1.5">
            <Icon w={9} h={9}>
                <path d="M0 4.500h9" stroke="#666" />
            </Icon>
        </button>
        <input
            type="range"
            aria-label="Zoom"
            min={0}
            max={100}
            defaultValue={50}
            className="mx-1 h-3 w-[105px] appearance-none bg-[linear-gradient(#b5b5b5,#b5b5b5)] bg-[length:100%_1px] bg-center bg-no-repeat [&::-webkit-slider-thumb]:h-3 [&::-webkit-slider-thumb]:w-[5px] [&::-webkit-slider-thumb]:appearance-none [&::-webkit-slider-thumb]:bg-[#666]"
        />
        <button aria-label="Zoom in">
            <Icon w={9} h={9}>
                <path d="M0 4.500h9M4.500 0v9" stroke="#666" />
            </Icon>
        </button>
        <span className="w-12 pr-2 text-right">100%</span>
    </div>
)

const App: React.FC = () => (
    <div className="flex h-screen flex-col overflow-hidden bg-[#e6e6e6] font-['Open_Sans','Noto_Sans',sans-serif]">
        <header className="relative shrink-0 bg-[#217346]">
            <Circuit />
            <div className="absolute inset-x-0 top-0 mx-auto flex h-px w-[251px]">
                <span className="w-[50px] bg-[#d0202c]" />
                <span className="flex-1 bg-[#2b2b2b]" />
            </div>
            <TitleBar />
            <RibbonTabs />
        </header>
        <Ribbon />
        <FormulaBar />
        <main className="flex min-h-0 flex-1">
            <Grid />
            <VerticalScroll />
        </main>
        <SheetBar />
        <StatusBar />
        <div className="h-px shrink-0 bg-[#5a5a5a]" />
    </div>
)

export default App
